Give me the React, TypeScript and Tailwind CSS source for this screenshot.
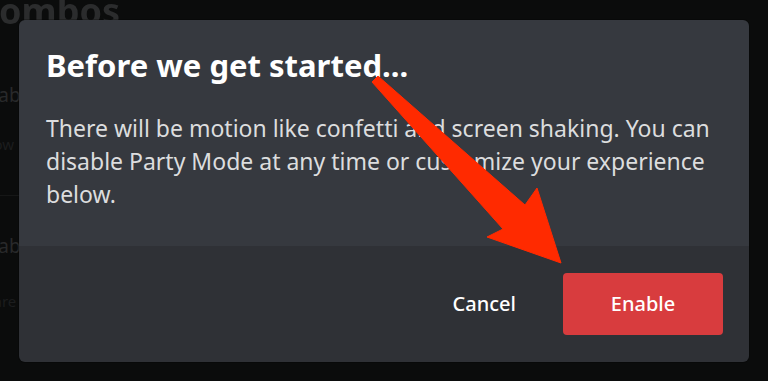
export default function App() {
  return (
    <div className="relative w-[768px] h-[381px] overflow-hidden bg-[#0b0c0c] font-['Noto_Sans',sans-serif]">
      {/* dimmed settings page behind the modal */}
      <div className="-ml-[24px] flex flex-col">
        <div className="-mt-[12px] text-[36px] font-bold leading-[46px] text-[#2b2c2d] blur-[0.6px]">
          Combos
        </div>
        <div className="mt-[49px] text-[19px] leading-[24px] text-[#28292a]">Enable combo counter</div>
        <div className="mt-[27px] text-[15px] leading-[20px] text-[#1c1d1e]">Show how many messages</div>
        <div className="mt-[41px] h-px w-[120px] bg-[#161717]" />
        <div className="mt-[38px] text-[19px] leading-[24px] text-[#28292a]">Enable shake screen</div>
        <div className="mt-[33px] text-[15px] leading-[20px] text-[#1c1d1e]">Share the party</div>
      </div>

      {/* modal */}
      <div className="absolute left-[19px] top-[20px] flex h-[342px] w-[730px] flex-col overflow-hidden rounded-[6px] shadow-[0_0_0_1px_rgba(0,0,0,0.25)]">
        <div className="flex-1 bg-[#36393f] px-[27px] pt-[26px]">
          <h1 className="text-[31px] font-bold leading-[38px] text-white">Before we get started...</h1>
          <p className="mt-[28px] text-[23px] leading-[33px] text-[#dcddde]">
            There will be motion like confetti and screen shaking. You can disable Party Mode at any time or
            customize your experience below.
          </p>
        </div>
        <div className="flex h-[116px] items-center justify-end bg-[#2f3136] pr-[26px]">
          <button className="mr-[47px] text-[20px] font-medium text-white">Cancel</button>
          <button className="h-[62px] w-[160px] rounded-[4px] bg-[#d83c3e] text-[20px] font-medium text-white">
            Enable
          </button>
        </div>
      </div>

      {/* annotation arrow */}
      <svg className="absolute inset-0" width="768" height="381" viewBox="0 0 768 381">
        <polygon
          points="378,76 525,205 537,188 561,263 487,237 503,229 372,82"
          fill="#ff2a00"
          stroke="#ff2a00"
          strokeWidth="1"
          strokeLinejoin="round"
        />
      </svg>
    </div>
  );
}
